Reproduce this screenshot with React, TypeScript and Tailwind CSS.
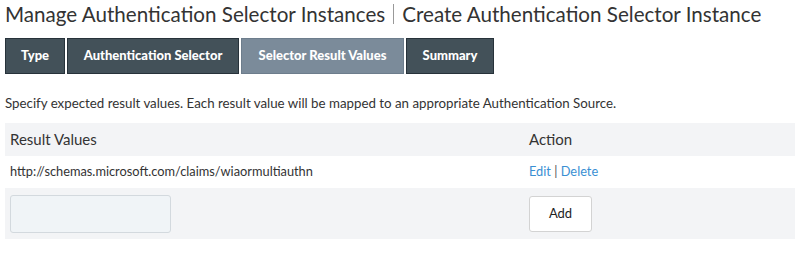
import React from 'react';

const tabs = [
  { label: 'Type', w: 'w-[60px]', active: false },
  { label: 'Authentication Selector', w: 'w-[172px]', active: false },
  { label: 'Selector Result Values', w: 'w-[163px]', active: true },
  { label: 'Summary', w: 'w-[88px]', active: false },
];

export default function App() {
  return (
    <div className="w-[800px] h-[256px] bg-white text-[#333] font-['Lato','Open_Sans',sans-serif] px-[5px]">
      <div className="flex items-center h-[28px] text-[20.6px] leading-none text-[#333]">
        <span>Manage Authentication Selector Instances</span>
        <span className="mx-[8px] w-px h-[20px] bg-[#999]" />
        <span>Create Authentication Selector Instance</span>
      </div>

      <div className="flex gap-[2px] mt-[10px]">
        {tabs.map((t) => (
          <div
            key={t.label}
            className={`${t.w} h-[36px] flex items-center justify-center text-[13px] font-black text-white border ${
              t.active ? 'bg-[#7b8b9a] border-[#6d7d8c]' : 'bg-[#435159] border-[#27323a]'
            }`}
          >
            {t.label}
          </div>
        ))}
      </div>

      <p className="mt-[21px] text-[13.3px] leading-[16px]">
        Specify expected result values. Each result value will be mapped to an appropriate Authentication Source.
      </p>

      <div className="mt-[12px]">
        <div className="flex items-center h-[33px] bg-[#f3f4f6] text-[15px]">
          <div className="w-[524px] pl-[5px]">Result Values</div>
          <div>Action</div>
        </div>
        <div className="flex items-center h-[32px] text-[12.8px]">
          <div className="w-[524px] pl-[5px]">http://schemas.microsoft.com/claims/wiaormultiauthn</div>
          <div className="text-[#3a8fd3]">
            Edit <span className="text-[#555]">|</span> Delete
          </div>
        </div>
        <div className="flex items-center h-[51px] bg-[#f3f4f6]">
          <div className="w-[524px] pl-[5px]">
            <input
              type="text"
              className="w-[161px] h-[38px] bg-[#f0f4f7] border border-[#d3d9de] rounded-[3px] outline-none"
            />
          </div>
          <button
            type="button"
            className="w-[63px] h-[36px] bg-white border border-[#d3d3d3] rounded-[3px] text-[13px] text-[#222]"
          >
            Add
          </button>
        </div>
      </div>
    </div>
  );
}
